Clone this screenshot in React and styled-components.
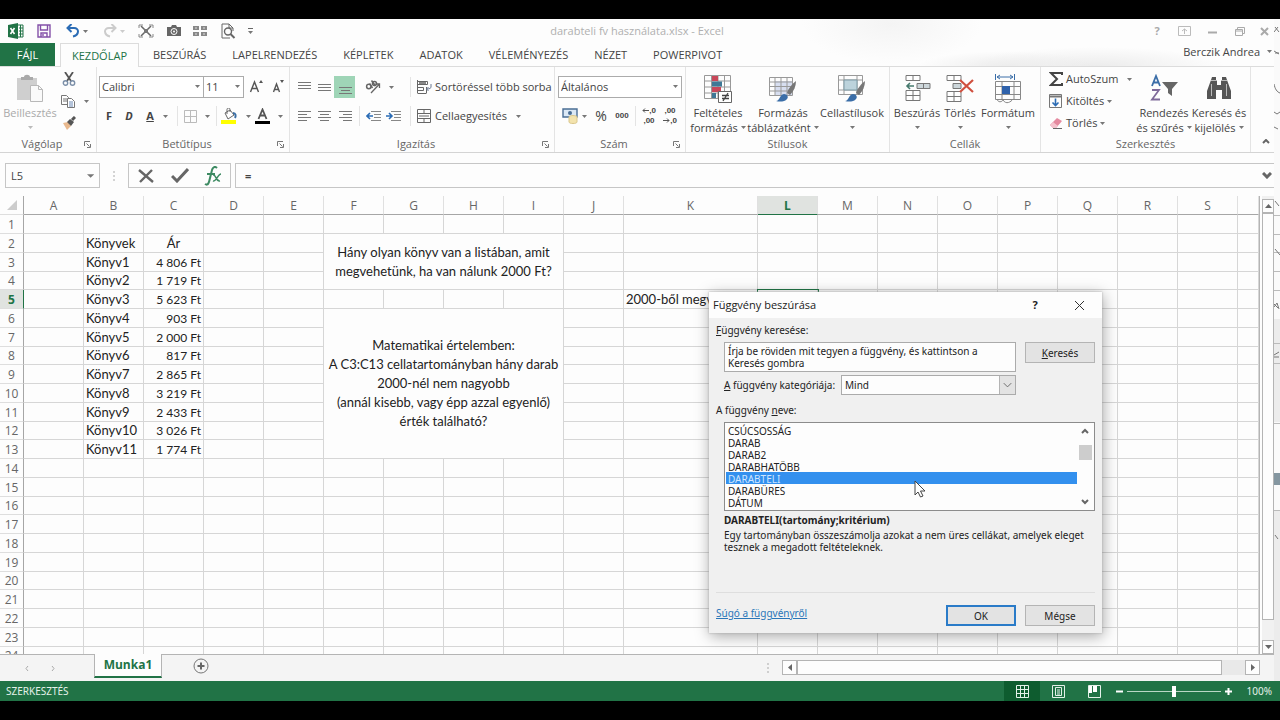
import React from "react";
import styled, { createGlobalStyle, css } from "styled-components";

const GlobalStyle = createGlobalStyle`
  * {
    box-sizing: border-box;
  }
  body {
    margin: 0;
    background: #000;
  }
  button, input, select, textarea {
    font: inherit;
    color: inherit;
    margin: 0;
    border-radius: 0;
  }
`;

const Screen = styled.div`
  height: 100vh;
  padding: 19px 0;
  display: flex;
  flex-direction: column;
  overflow: hidden;
  background: #000;
  color: #444;
  font-family: "Open Sans", "Noto Sans", sans-serif;
  font-size: 11px;
  line-height: 14px;
`;
const Desktop = styled.div`
  flex: 1;
  min-height: 0;
  display: flex;
  background: #fdfdfd;
`;
const Workbook = styled.main`
  position: relative;
  flex: 1;
  min-width: 0;
  display: flex;
  flex-direction: column;
`;
const Header = styled.header`
  background: radial-gradient(ellipse 90px 16px at 79% 100%, #ececec, transparent),
    radial-gradient(ellipse 130px 20px at 86% 100%, #ebebeb, transparent),
    radial-gradient(ellipse 90px 40px at 70% 10%, #f4f4f4, transparent), #fdfdfd;
`;
const TitleBar = styled.div`
  height: 24px;
  display: flex;
  align-items: center;
`;
const QuickAccess = styled.div`
  flex: 1;
  display: flex;
  align-items: center;
`;
const Title = styled.h1`
  margin: 0;
  font-size: 11px;
  font-weight: 400;
  color: #b0b0b0;
`;
const WindowButtons = styled.div`
  flex: 1;
  display: flex;
  justify-content: flex-end;
`;
const TabRow = styled.nav`
  height: 24px;
  display: flex;
  align-items: stretch;
  border-bottom: 1px solid #dcdcdc;
`;
const FileTab = styled.button`
  width: 55px;
  margin-right: 5px;
  padding: 0;
  border: 0;
  background: #217346;
  color: #fff;
`;
const Tab = styled.button`
  padding: 0 13px;
  border: 0;
  background: none;
  ${(props) =>
    props.$active &&
    css`
      padding: 0 11px;
      margin: 0 1px -1px 0;
      border: 1px solid #dcdcdc;
      border-bottom: 0;
      background: #fdfdfd;
      color: #217346;
    `}
`;
const UserButton = styled.button`
  margin-left: auto;
  padding: 0 2px 6px 0;
  border: 0;
  background: none;
  display: flex;
  align-items: center;
  gap: 7px;
`;

const Ribbon = styled.div`
  height: 86px;
  display: flex;
  border-bottom: 1px solid #d4d4d4;
`;
const GroupBox = styled.section`
  flex: 0 0 ${(props) => props.$width}px;
  display: flex;
  flex-direction: column;
  border-right: 1px solid #e4e4e4;
`;
const GroupBody = styled.div`
  flex: 1;
  min-height: 0;
  display: flex;
  padding: 1px 0 0 ${(props) => props.$pad || 0}px;
`;
const GroupLabel = styled.div`
  height: 16px;
  padding-right: ${(props) => (props.$launcher ? 5 : 0)}px;
  display: flex;
  align-items: center;
  text-align: center;
  color: #666;
  span {
    flex: 1;
  }
`;
const Rows = styled.div`
  display: flex;
  flex-direction: column;
  gap: ${(props) => (props.$spaced ? 5 : 0)}px;
  padding-top: ${(props) => (props.$spaced ? 4 : 0)}px;
`;
const Row = styled.div`
  height: ${(props) => props.$height || 22}px;
  display: flex;
  align-items: center;
`;
const Tool = styled.button`
  flex: none;
  width: ${(props) => (props.$width ? props.$width + "px" : "auto")};
  height: 22px;
  padding: 0;
  border: 0;
  display: flex;
  align-items: center;
  justify-content: ${(props) => (props.$start ? "flex-start" : "center")};
  gap: 3px;
  white-space: nowrap;
  background: ${(props) => (props.$on ? "#9fd5b7" : "none")};
  color: ${(props) => (props.$dim ? "#aaa" : "inherit")};
  font-size: ${(props) => (props.$large ? 14 : 11)}px;
  font-weight: ${(props) => (props.$bold ? 700 : 400)};
`;
const BigTool = styled.button`
  flex: none;
  width: ${(props) => props.$width}px;
  padding: 6px 0 0;
  border: 0;
  background: none;
  display: flex;
  flex-direction: column;
  align-items: center;
  white-space: nowrap;
  color: ${(props) => (props.$dim ? "#aaa" : "#444")};
  svg {
    flex: none;
  }
`;
const BigLabel = styled.span`
  height: 15px;
  display: flex;
  align-items: center;
  gap: 3px;
`;
const IconSlot = styled.span`
  height: 31px;
`;
const Divider = styled.span`
  width: 1px;
  height: 20px;
  margin: 0 ${(props) => props.$gap || 0}px;
  background: #e4e4e4;
`;
const Combo = styled.span`
  position: relative;
  flex: none;
  width: ${(props) => props.$width}px;
  height: 22px;
  margin-right: -1px;
  select {
    width: 100%;
    height: 100%;
    padding: 0 2px;
    appearance: none;
    border: 1px solid #ababab;
    background: #fff;
  }
  svg {
    position: absolute;
    right: 4px;
    top: 9px;
    pointer-events: none;
  }
`;
const CollapseSlot = styled.div`
  flex: 1;
  display: flex;
  align-items: flex-end;
  padding-left: 4px;
`;

const FormulaBar = styled.div`
  height: 43px;
  padding: 10px 0 8px 5px;
  display: flex;
  background: #fdfdfd;
`;
const NameBox = styled.label`
  width: 95px;
  display: flex;
  align-items: center;
  padding-right: 5px;
  border: 1px solid #c6c6c6;
  input {
    width: 100%;
    padding: 0 5px;
    border: 0;
    outline: 0;
    background: none;
  }
`;
const Grip = styled.span`
  width: 28px;
  display: flex;
  align-items: center;
  justify-content: center;
`;
const FormulaButtons = styled.div`
  width: 103px;
  display: flex;
  border: 1px solid #c6c6c6;
  button {
    flex: 1;
    height: auto;
  }
`;
const FormulaInput = styled.label`
  flex: 1;
  margin-left: 4px;
  display: flex;
  align-items: center;
  border: 1px solid #c6c6c6;
  border-right: 0;
  input {
    flex: 1;
    padding: 0 9px;
    border: 0;
    outline: 0;
    background: none;
    font-weight: 700;
  }
`;

const SheetArea = styled.div`
  flex: 1;
  min-height: 0;
  display: flex;
  overflow: hidden;
`;
const SheetView = styled.div`
  flex: 1;
  overflow: hidden;
  border-right: 1px solid #b4b4b4;
`;
const Sheet = styled.table`
  width: 100%;
  table-layout: fixed;
  border-collapse: separate;
  border-spacing: 0;
  tr {
    height: 19px;
  }
  tbody tr:nth-child(4n) {
    height: 18px;
  }
`;
const HeadCell = styled.th`
  padding: 0;
  line-height: 17px;
  font-size: 12px;
  font-weight: ${(props) => (props.$active ? 700 : 400)};
  color: ${(props) => (props.$active ? "#217346" : "#666")};
  background: ${(props) => (props.$active ? "#e0e3e0" : "none")};
`;
const ColumnHead = styled(HeadCell)`
  border-right: 1px solid #e0e0e0;
  border-bottom: 1px solid ${(props) => (props.$active ? "#217346" : "#a6a6a6")};
`;
const RowHead = styled(HeadCell)`
  border-right: 1px solid ${(props) => (props.$active ? "#217346" : "#a6a6a6")};
  border-bottom: 1px solid #dedede;
`;
const Cell = styled.td`
  padding: 0 2px;
  border-right: 1px solid #d6d6d6;
  border-bottom: 1px solid #d6d6d6;
  color: #222;
  font-family: Lato, sans-serif;
  font-size: ${(props) => (props.$price ? 12 : 13)}px;
  line-height: ${(props) => (props.$merged ? 19 : 17)}px;
  text-align: ${(props) => props.$align || "left"};
  white-space: pre;
  overflow: visible;
  box-shadow: ${(props) => (props.$active ? "0 0 0 1px #217346" : "none")};
`;
const VScroll = styled.div`
  width: 12px;
  margin-left: 2px;
  padding: 3px 0 0;
  display: flex;
  flex-direction: column;
  background: #f1f1f1;
`;
const ScrollButton = styled.button`
  flex: none;
  width: ${(props) => props.$width || 12}px;
  height: ${(props) => props.$width || 14}px;
  padding: 0;
  border: 1px solid #b4b4b4;
  background: #fdfdfd;
  display: flex;
  align-items: center;
  justify-content: center;
`;
const ScrollThumb = styled.div`
  flex: ${(props) => props.$size};
  border: 1px solid #b4b4b4;
  background: #fdfdfd;
`;
const ScrollSpace = styled.div`
  flex: ${(props) => props.$size};
`;

const SheetTabs = styled.footer`
  height: 27px;
  display: flex;
  background: #f4f4f4;
  border-top: 1px solid #b4b4b4;
`;
const SheetNav = styled.div`
  width: 94px;
  padding-left: 14px;
  display: flex;
  align-items: center;
`;
const SheetTab = styled.button`
  width: 68px;
  height: 24px;
  margin-top: -1px;
  padding: 0;
  border: 1px solid #b4b4b4;
  border-top: 0;
  border-bottom: 2px solid #217346;
  background: #fdfdfd;
  color: #217346;
  font-size: 12px;
  font-weight: 700;
`;
const TabSpace = styled.span`
  flex: 1;
`;
const HScroll = styled.div`
  width: 478px;
  height: 15px;
  margin: 5px 14px 0 0;
  display: flex;
  background: #e9e9e9;
`;
const StatusBar = styled.div`
  height: 20px;
  padding: 0 8px 0 6px;
  display: flex;
  align-items: center;
  background: #217346;
  color: #e4f1e9;
  font-family: "Noto Sans", sans-serif;
  font-size: 10px;
`;
const StatusTools = styled.div`
  margin-left: auto;
  display: flex;
  align-items: center;
`;
const ViewButton = styled.button`
  width: 36px;
  height: 20px;
  padding: 0;
  border: 0;
  display: flex;
  align-items: center;
  justify-content: center;
  background: ${(props) => (props.$on ? "#0e5c2f" : "none")};
`;
const ZoomSlider = styled.input`
  width: 94px;
  height: 12px;
  appearance: none;
  background: linear-gradient(#b9d6c5, #b9d6c5) center / 100% 1px no-repeat;
  &::-webkit-slider-thumb {
    appearance: none;
    width: 4px;
    height: 11px;
    background: #fff;
  }
`;
const ZoomStep = styled.button`
  width: 15px;
  height: 18px;
  padding: 0;
  border: 0;
  background: none;
`;
const ZoomValue = styled.span`
  width: 36px;
  text-align: right;
`;

const Dialog = styled.section`
  position: absolute;
  left: 709px;
  top: 273px;
  width: 393px;
  height: 341px;
  background: #f0f0f0;
  color: #222;
  font-family: "Noto Sans", sans-serif;
  font-size: 10px;
  line-height: 12px;
  box-shadow: 0 0 2px #aaa, 1px 3px 14px rgba(0, 0, 0, 0.35);
`;
const DialogTitle = styled.div`
  height: 26px;
  padding-left: 4px;
  display: flex;
  align-items: center;
  background: #fdfdfd;
  h2 {
    flex: 1;
    margin: 0;
    font-family: "Open Sans", sans-serif;
    font-size: 11px;
    font-weight: 400;
  }
`;
const DialogBody = styled.form`
  padding: 6px 7px 0;
`;
const FieldLabel = styled.label`
  display: block;
  height: 12px;
`;
const NameLabel = styled(FieldLabel)`
  margin-top: 9px;
`;
const SearchGrid = styled.div`
  padding: 6px 0 0 8px;
  display: grid;
  grid-template-columns: 292px 70px;
  column-gap: 9px;
  row-gap: 3px;
`;
const SearchText = styled.textarea`
  height: 30px;
  padding: 2px 3px;
  border: 1px solid #ababab;
  background: #fdfdfd;
  resize: none;
  overflow: hidden;
  outline: 0;
`;
const CategoryRow = styled.div`
  display: flex;
  align-items: center;
  justify-content: space-between;
`;
const CategorySelect = styled.span`
  position: relative;
  width: 175px;
  height: 20px;
  select {
    width: 100%;
    height: 100%;
    padding: 0 3px;
    appearance: none;
    border: 1px solid #ababab;
    background: #fdfdfd;
  }
  svg {
    position: absolute;
    right: 1px;
    top: 1px;
    background: #e3e3e3;
    border-left: 1px solid #b4b4b4;
    pointer-events: none;
  }
`;
const DialogButton = styled.button`
  width: 70px;
  height: 21px;
  padding: 0;
  border: ${(props) => (props.$primary ? "2px solid #2a7bc8" : "1px solid #b4b4b4")};
  background: #e3e3e3;
`;
const ListFrame = styled.div`
  margin: 6px 0 0 8px;
  height: 89px;
  display: flex;
  border: 1px solid #8c8c8c;
  background: #fdfdfd;
`;
const FunctionList = styled.select`
  flex: 1;
  padding: 1px;
  border: 0;
  outline: 0;
  overflow: hidden;
  background: #fdfdfd;
  option {
    min-height: 12px;
    height: 12px;
    padding: 0 2px;
    line-height: 12px;
    color: #222;
  }
  option:checked {
    background: #3390ee linear-gradient(#3390ee, #3390ee);
    color: #cfe6ff;
  }
`;
const ListScroll = styled.div`
  width: 16px;
  display: flex;
  flex-direction: column;
  align-items: center;
  justify-content: space-between;
  padding: 5px 2px 5px 0;
`;
const ListThumb = styled.span`
  width: 13px;
  height: 15px;
  margin-bottom: 28px;
  background: #cdcdcd;
`;
const Help = styled.div`
  height: 79px;
  margin-top: 3px;
  padding-left: 8px;
  border-bottom: 1px solid #dedede;
  p {
    margin: 3px 0 0;
  }
`;
const DialogFooter = styled.div`
  padding-top: 12px;
  display: flex;
  gap: 9px;
  a {
    flex: 1;
    padding-top: 2px;
    color: #2a76b8;
  }
`;
const Pointer = styled.svg`
  position: absolute;
  left: 914px;
  top: 461px;
`;

function Icon({ w = 16, h = w, box, children }) {
  return (
    <svg width={w} height={h} viewBox={box || `0 0 ${w} ${h}`} fill="none" stroke="#666" aria-hidden="true">
      {children}
    </svg>
  );
}
const Caret = ({ color = "#777" }) => (
  <Icon w={5} h={3}>
    <path d="M0 0h5L2.5 3z" fill={color} stroke="none" />
  </Icon>
);
const Chevron = ({ d = "M1 5l4-4 4 4", w = 10, h = 6, weight = 2 }) => (
  <Icon w={w} h={h}>
    <path d={d} strokeWidth={weight} />
  </Icon>
);
const Lines = ({ rows }) => (
  <Icon w={14} h={16}>
    {rows.map(([x, y, width]) => (
      <path key={y} d={`M${x} ${y}.5h${width}`} stroke="#777" />
    ))}
  </Icon>
);
const Launcher = () => (
  <Icon w={7} h={7}>
    <path d="M.5 5V.5H6M2.5 2.5l3 3M6.5 3v3.5H3" stroke="#777" />
  </Icon>
);
const ExcelLogo = () => (
  <Icon>
    <path d="M9 2h6v12H9M11 5h4M11 8h4M11 11h4M12.500 2v12" stroke="#217346" />
    <path d="M0 2l10-2v16L0 14z" fill="#217346" stroke="none" />
    <path d="M2.500 5l4 6M6.500 5l-4 6" stroke="#fff" strokeWidth="1.600" />
  </Icon>
);
const Save = () => (
  <Icon w={14}>
    <path d="M1 1h12v12H1zM3.500 1v5h7V1M4 13V9h6v4M6 10v2" stroke="#8350a8" strokeWidth="1.400" />
  </Icon>
);
const Undo = ({ color = "#2b6cb5", flip }) => (
  <Icon w={14}>
    <g transform={flip ? "matrix(-1 0 0 1 14 0)" : undefined} stroke={color} strokeWidth="2">
      <path d="M5.500 0L1.500 4l4 4" />
      <path d="M2 4h6c5.500 0 5.500 7-1 8.500" />
    </g>
  </Icon>
);
const FullScreen = () => (
  <Icon>
    <path d="M3 3l10 10M13 3L3 13" strokeWidth="1.500" />
    <path d="M1 5V2h4M11 2h4v3M1 11v3h4M11 14h4v-3" stroke="#888" />
    <path d="M6 6h4v4H6z" fill="#777" stroke="none" />
  </Icon>
);
const Camera = () => (
  <Icon>
    <path d="M1 4h4l1-2h4l1 2h4v9H1z" fill="#666" stroke="none" />
    <circle cx="8" cy="8.500" r="3" stroke="#fdfdfd" />
    <circle cx="8" cy="8.500" r="1" fill="#fdfdfd" stroke="none" />
  </Icon>
);
const Tiles = () => (
  <Icon>
    <path d="M1 3h6v4H1zM9 3h6v4H9zM1 9h6v4H1zM9 9h6v4H9z" fill="#888" stroke="none" />
    <path d="M3 5h2M11 5h2M3 11h2M11 11h2" stroke="#ddd" />
  </Icon>
);
const Preview = () => (
  <Icon>
    <path d="M10 15H2V1h7l4 4v3M9 1v4h4" />
    <circle cx="8" cy="8.500" r="3.500" strokeWidth="1.400" />
    <path d="M10.500 11l4 4" strokeWidth="2" />
  </Icon>
);
const Paste = () => (
  <Icon w={28} h={30}>
    <path d="M1 4h20v22H1z" fill="#cfcfcf" stroke="none" />
    <path d="M5 6V3h3c0-3 6-3 6 0h3v3z" fill="#aaa" stroke="none" />
    <path d="M14.500 11.500h8l4 4v12h-12z" fill="#fafafa" stroke="#b8b8b8" />
    <path d="M22.500 11.500v4h4" stroke="#b8b8b8" />
  </Icon>
);
const Scissors = () => (
  <Icon w={14}>
    <path d="M3 0l6 9M11 0L5 9" stroke="#555" strokeWidth="1.800" />
    <circle cx="3.500" cy="11" r="2.200" stroke="#7b8fa8" strokeWidth="1.400" />
    <circle cx="10.500" cy="11" r="2.200" stroke="#7b8fa8" strokeWidth="1.400" />
  </Icon>
);
const Copy = () => (
  <Icon w={14}>
    <path d="M.5 1.500h5l2 2v7h-7zM2 5h4M2 7h4" stroke="#777" />
    <path d="M6.500 4.500h4l3 3v6h-7z" fill="#fff" stroke="#777" />
    <path d="M8 8h4M8 10h4M8 12h4" stroke="#6b89b5" />
  </Icon>
);
const Painter = () => (
  <Icon w={14}>
    <path d="M1 7l5-1 3 4-4 4z" fill="#e9b98e" stroke="none" />
    <path d="M5 6l3-3 4 3-3 4z" fill="#555" stroke="none" />
    <path d="M10 4l3-3" stroke="#555" strokeWidth="3" />
  </Icon>
);
const Borders = () => (
  <Icon w={13}>
    <path d="M.5.5h12v12H.5zM6.500.5v12M.5 6.500h12" stroke="#bbb" />
  </Icon>
);
const Fill = () => (
  <Icon w={16}>
    <path d="M4 5l5-3 4 5-6 4z" fill="#fff" />
    <path d="M6 6V1.500c0-2 3-2 3 0V4" />
    <path d="M12 5c3 0 3 3 2 5" stroke="#3a6ea5" strokeWidth="2" />
    <path d="M0 12h15v4H0z" fill="#ffff00" stroke="none" />
  </Icon>
);
const FontColor = () => (
  <Icon w={15} h={16}>
    <path d="M3.500 11l4-9.500 4 9.500M5 7.500h5" stroke="#555" strokeWidth="1.800" />
    <path d="M0 13h15v3H0z" fill="#000" stroke="none" />
  </Icon>
);
const Grow = ({ up }) => (
  <Icon w={14} h={16}>
    <path d={up ? "M1.500 13l4-10 4 10M3 9.500h5" : "M2.500 13l3-8 3 8M3.500 10.500h4"} stroke="#555" strokeWidth="1.400" />
    <path d={up ? "M10 4l2-3 2 3z" : "M9 1h4l-2 3z"} fill="#555" stroke="none" />
  </Icon>
);
const Orientation = () => (
  <Icon w={16}>
    <path d="M6 14l8.500-9M14.500 9V5h-4" strokeWidth="1.300" />
    <circle cx="3.800" cy="7.500" r="2.200" strokeWidth="1.500" />
    <path d="M4.500 4.500l3 4.500M6.500 1.500l4 5.500" strokeWidth="1.500" />
    <circle cx="9.500" cy="4.500" r="2" strokeWidth="1.500" />
  </Icon>
);
const Indent = ({ right }) => (
  <Icon w={16} h={14}>
    <path d="M5 2.500h10M8 5.500h7M8 8.500h7M5 11.500h10" stroke="#888" />
    <path d={right ? "M0 7h6M3 4l3 3-3 3" : "M7 7H1M4 4L1 7l3 3"} stroke="#2b6cb5" strokeWidth="1.600" />
  </Icon>
);
const Wrap = () => (
  <Icon w={15}>
    <path d="M.5 0v13M.5 1.500h10v3H.5zM.5 7.500h6v3h-6zM.5 13.500h9M9.500 7v6" />
    <path d="M2 3h7" stroke="#888" strokeWidth="2" />
    <path d="M14 4v3c0 1-1 2-4 2M11.500 7l-2 2 2 2" stroke="#6a7892" />
  </Icon>
);
const Merge = () => (
  <Icon w={15} h={15}>
    <path d="M.5.5h13v13H.5zM.5 4.500h13M.5 9.500h13M7 0v4.500M7 9.500v4M2 7h10" />
  </Icon>
);
const Currency = () => (
  <Icon w={17} h={16}>
    <path d="M1 1h14v8H1z" fill="#dbe8f5" stroke="#4a6d94" strokeWidth="1.400" />
    <circle cx="8" cy="5" r="2" fill="#4a6d94" stroke="none" />
    <path d="M7 9c0-2 8-2 8 0v5c0 2-8 2-8 0z" fill="#f3e3ad" stroke="#d9c68c" />
  </Icon>
);
const DecimalArrow = ({ left }) => (
  <Icon w={7} h={5}>
    <path d={left ? "M7 2.500H1M3 .5l-2 2 2 2" : "M0 2.500h6M4 .5l2 2-2 2"} stroke="#555" />
  </Icon>
);
const Decimals = styled.span`
  display: flex;
  flex-direction: column;
  font-family: "Liberation Sans", sans-serif;
  font-size: 8px;
  line-height: 10px;
  font-weight: 700;
`;
const Conditional = () => (
  <Icon w={30} h={30}>
    <path d="M1.500 1.500h26v23h-26zM1.500 7h26M1.500 13h26M1.500 19h26M8.500 1v23M15 1v23M21.500 1v23" stroke="#999" />
    <path d="M9 2h6v5H9zM9 13h9v5H9z" fill="#c9475a" stroke="none" />
    <path d="M9 7.500h10v5H9zM9 19h4v5H9z" fill="#3f7896" stroke="none" />
    <path d="M15.500 17.500h13v11h-13z" fill="#fff" />
    <path d="M19 21.500h7M19 24.500h7M25 19l-5 8" stroke="#444" strokeWidth="1.300" />
  </Icon>
);
const Brush = () => (
  <>
    <path d="M28 7c-4 3-8 8-9 12l3 2c4-4 6-9 6-14z" fill="#777" stroke="none" />
    <path d="M8 27c4 0 3-6 8-7 3 0 5 3 3 5-2 3-8 3-11 2z" fill="#3b6ea8" stroke="none" />
  </>
);
const FormatTable = () => (
  <Icon w={30} h={30}>
    <path d="M7 7h17v14H7z" fill="#d7def0" stroke="none" />
    <path d="M1.500 3.500h23v18h-23zM1.500 8h23M1.500 12.500h23M1.500 17h23M7 3v18M13 3v18M19 3v18" stroke="#999" />
    <Brush />
  </Icon>
);
const CellStyles = () => (
  <Icon w={30} h={30}>
    <path d="M1.500 1.500h24v19h-24zM1.500 6h24M1.500 16h24M7 1v20M20 1v20" stroke="#999" />
    <path d="M7 6h13v10H7z" fill="#bcd3dc" stroke="#7c9aa5" />
    <Brush />
  </Icon>
);
const InsertCells = () => (
  <Icon w={28} h={30}>
    <path d="M3 1.500h14v5H3zM10 1.500v5M3 16.500h14v10H3zM3 21.500h14M10 16.500v10" fill="#fff" stroke="#777" />
    <path d="M14 9.500h13v5H14zM20.500 9v5" fill="#ccd6da" stroke="#777" />
    <path d="M11 12H4M7 9l-3 3 3 3" stroke="#467a6e" strokeWidth="1.600" />
  </Icon>
);
const DeleteCells = () => (
  <Icon w={28} h={30}>
    <path d="M1 1.500h14v5H1zM8 1.500v5M1 17.500h14v10H1zM1 22.500h14M8 17.500v10" fill="#fff" stroke="#777" />
    <path d="M7 9.500h8v5H7z" fill="#ccd6da" stroke="#777" />
    <path d="M14 6l13 12M27 6L14 18" stroke="#d0503f" strokeWidth="2.200" />
  </Icon>
);
const FormatCells = () => (
  <Icon w={28} h={30}>
    <path d="M1.500 7.500h25v18h-25zM1.500 12.500h25M1.500 20.500h25M8 7v18M20 7v18M3 25c1 4 5 3 6 1 3 5 8 2 10-1" stroke="#888" />
    <path d="M1.500 0v6M20.500 0v6M3 3h16M6 1L3 3l3 2M16 1l3 2-3 2" stroke="#3b6ea8" />
    <path d="M8 12h8v8H8z" fill="#2f62ab" stroke="none" />
  </Icon>
);
const Sigma = () => (
  <Icon w={14} h={14}>
    <path d="M13 3V1H2l6 6-6 6h11v-2" stroke="#444" strokeWidth="2" />
  </Icon>
);
const FillDown = () => (
  <Icon w={14} h={14}>
    <path d="M.5.5h12v13H.5z" stroke="#777" />
    <path d="M.5 2.500h12" stroke="#777" strokeWidth="2" />
    <path d="M6.500 4.500v7M3.500 8.500l3 3 3-3" stroke="#2b6cb5" strokeWidth="1.600" />
  </Icon>
);
const Eraser = () => (
  <Icon w={14} h={14}>
    <path d="M1 9l7-7 5 3-6 7H4z" fill="#e58aa0" stroke="none" />
    <path d="M1 9l3-3 5 4-2 2H4z" fill="#f5c2cd" stroke="none" />
    <path d="M4 12.500h9" />
  </Icon>
);
const Sort = () => (
  <Icon w={28} h={28}>
    <path d="M2 12l4-10 4 10M3.500 8.500h5" stroke="#3b6ea8" strokeWidth="1.800" />
    <path d="M2 16h7l-7 9.500h8" stroke="#7f6a9a" strokeWidth="1.800" />
    <path d="M12 8h16l-6 7v7l-4-3v-4z" fill="#666" stroke="none" />
  </Icon>
);
const Binoculars = () => (
  <Icon w={26} h={28}>
    <path d="M6 3h4v3h1v5h4V6h1V3h4l1 3 4 11v8h-9v-9h-6v9H1v-8L5 6z" fill="#555" stroke="none" />
    <path d="M5 6.500h6M15 6.500h6M5.500 10v12M20.500 10v12" stroke="#bbb" />
  </Icon>
);

function Group({ name, width, pad, launcher, children }) {
  return (
    <GroupBox $width={width} aria-label={name}>
      <GroupBody $pad={pad}>{children}</GroupBody>
      <GroupLabel $launcher={launcher}>
        <span>{name}</span>
        {launcher && <Launcher />}
      </GroupLabel>
    </GroupBox>
  );
}

function Large({ icon, lines, width, dim }) {
  const color = dim ? "#bbb" : "#777";
  return (
    <BigTool $width={width} $dim={dim} type="button">
      <IconSlot>{icon}</IconSlot>
      <BigLabel>{lines[0]}</BigLabel>
      <BigLabel>
        {lines[1]}
        <Caret color={color} />
      </BigLabel>
    </BigTool>
  );
}

const tabs = ["KEZDŐLAP", "BESZÚRÁS", "LAPELRENDEZÉS", "KÉPLETEK", "ADATOK", "VÉLEMÉNYEZÉS", "NÉZET", "POWERPIVOT"];

function TopBar() {
  return (
    <Header>
      <TitleBar>
        <QuickAccess>
          <Tool $width={32} aria-label="Excel"><ExcelLogo /></Tool>
          <Tool $width={24} aria-label="Mentés"><Save /></Tool>
          <Tool $width={42} aria-label="Visszavonás"><Undo /><Caret /></Tool>
          <Tool $width={32} aria-label="Mégis"><Undo flip color="#ccc" /><Caret color="#ccc" /></Tool>
          <Tool $width={32} aria-label="Teljes képernyő"><FullScreen /></Tool>
          <Tool $width={24} aria-label="Kamera"><Camera /></Tool>
          <Tool $width={28} aria-label="Ablakok"><Tiles /></Tool>
          <Tool $width={28} aria-label="Nyomtatási kép"><Preview /></Tool>
          <Tool $width={16} aria-label="Testreszabás">
            <Icon w={5} h={7}><path d="M0 .5h5" /><path d="M0 3h5L2.500 6z" fill="#777" stroke="none" /></Icon>
          </Tool>
        </QuickAccess>
        <Title>darabteli fv használata.xlsx - Excel</Title>
        <WindowButtons>
          <Tool $width={26} $bold $dim aria-label="Súgó">?</Tool>
          <Tool $width={28} aria-label="Menüszalag">
            <Icon w={13} h={10}><path d="M.5.5h12v9H.5zM6.500 8V3M4 5l2.500-2L9 5" stroke="#bbb" /></Icon>
          </Tool>
          <Tool $width={28} aria-label="Kis méret"><Icon w={9} h={9}><path d="M0 5.500h9" stroke="#aaa" strokeWidth="2" /></Icon></Tool>
          <Tool $width={28} aria-label="Előző méret">
            <Icon w={10} h={9}><path d="M.5 2.500h7v6h-7zM2.500 2V.5h7v6H8M.5 4h7" stroke="#aaa" /></Icon>
          </Tool>
          <Tool $width={20} aria-label="Bezárás"><Icon w={9} h={9}><path d="M1 1l7 7M8 1L1 8" stroke="#aaa" strokeWidth="2" /></Icon></Tool>
        </WindowButtons>
      </TitleBar>
      <TabRow>
        <FileTab type="button">FÁJL</FileTab>
        {tabs.map((tab, i) => (
          <Tab key={tab} type="button" $active={i === 0}>{tab}</Tab>
        ))}
        <UserButton type="button">Berczik Andrea <Caret /></UserButton>
      </TabRow>
    </Header>
  );
}

function RibbonBar() {
  return (
    <Ribbon>
      <Group name="Vágólap" width={97} launcher>
        <Large dim width={60} icon={<Paste />} lines={["Beillesztés"]} />
        <Rows>
          <Row><Tool $width={18} aria-label="Kivágás"><Scissors /></Tool></Row>
          <Row><Tool $width={30} aria-label="Másolás"><Copy />&nbsp;<Caret /></Tool></Row>
          <Row><Tool $width={18} aria-label="Formátummásoló"><Painter /></Tool></Row>
        </Rows>
      </Group>
      <Group name="Betűtípus" width={193} pad={2} launcher>
        <Rows $spaced>
          <Row $height={30}>
            <Combo $width={105}><select aria-label="Betűtípus"><option>Calibri</option></select><Caret /></Combo>
            <Combo $width={41}><select aria-label="Betűméret"><option>11</option></select><Caret /></Combo>
            <Tool $width={26} aria-label="Betűméret növelése"><Grow up /></Tool>
            <Tool $width={18} aria-label="Betűméret csökkentése"><Grow /></Tool>
          </Row>
          <Row $height={18}>
            <Tool $width={20} $bold>F</Tool>
            <Tool $width={20} $bold><i>D</i></Tool>
            <Tool $width={36} $bold><u>A</u>&nbsp;<Caret /></Tool>
            <Divider $gap={2} />
            <Tool $width={34} aria-label="Szegélyek"><Borders />&nbsp;<Caret /></Tool>
            <Divider $gap={2} />
            <Tool $width={34} aria-label="Kitöltőszín"><Fill />&nbsp;<Caret /></Tool>
            <Tool $width={32} aria-label="Betűszín"><FontColor />&nbsp;<Caret /></Tool>
          </Row>
        </Rows>
      </Group>
      <Group name="Igazítás" width={265} pad={4} launcher>
        <Rows $spaced>
          <Row $height={30}>
            <Tool $width={20} aria-label="Felülre"><Lines rows={[[1, 3, 13], [1, 6, 13], [1, 9, 13]]} /></Tool>
            <Tool $width={20} aria-label="Középre"><Lines rows={[[1, 5, 13], [1, 8, 13], [1, 11, 13]]} /></Tool>
            <Tool $width={21} $on aria-label="Alulra"><Lines rows={[[1, 8, 13], [3, 11, 9], [1, 14, 13]]} /></Tool>
            <Tool $width={49} aria-label="Tájolás"><Orientation />&nbsp;<Caret /></Tool>
            <Divider $gap={6} />
            <Tool $start><Wrap />Sortöréssel több sorba</Tool>
          </Row>
          <Row $height={18}>
            <Tool $width={20} aria-label="Balra"><Lines rows={[[1, 3, 13], [1, 6, 9], [1, 9, 13], [1, 12, 9]]} /></Tool>
            <Tool $width={20} aria-label="Középre zárt"><Lines rows={[[1, 3, 13], [3, 6, 9], [1, 9, 13], [3, 12, 9]]} /></Tool>
            <Tool $width={21} aria-label="Jobbra"><Lines rows={[[1, 3, 13], [5, 6, 9], [1, 9, 13], [5, 12, 9]]} /></Tool>
            <Divider $gap={4} />
            <Tool $width={20} aria-label="Behúzás csökkentése"><Indent /></Tool>
            <Tool $width={20} aria-label="Behúzás növelése"><Indent right /></Tool>
            <Divider $gap={6} />
            <Tool $start><Merge />Cellaegyesítés&nbsp;&nbsp;<Caret /></Tool>
          </Row>
        </Rows>
      </Group>
      <Group name="Szám" width={131} pad={3} launcher>
        <Rows $spaced>
          <Row $height={30}>
            <Combo $width={124}><select aria-label="Számformátum"><option>Általános</option></select><Caret /></Combo>
          </Row>
          <Row $height={18}>
            <Tool $width={32} aria-label="Pénznem"><Currency /><Caret /></Tool>
            <Tool $width={22} $large>%</Tool>
            <Tool $width={20}><Decimals>000</Decimals></Tool>
            <Divider $gap={3} />
            <Tool $width={20} aria-label="Tizedeshelyek növelése">
              <Decimals><span><DecimalArrow left />,0</span><span>,00</span></Decimals>
            </Tool>
            <Tool $width={22} aria-label="Tizedeshelyek csökkentése">
              <Decimals><span>,00</span><span><DecimalArrow />,0</span></Decimals>
            </Tool>
          </Row>
        </Rows>
      </Group>
      <Group name="Stílusok" width={204}>
        <Large width={64} icon={<Conditional />} lines={["Feltételes", "formázás"]} />
        <Large width={66} icon={<FormatTable />} lines={["Formázás", "táblázatként"]} />
        <Large width={72} icon={<CellStyles />} lines={["Cellastílusok"]} />
      </Group>
      <Group name="Cellák" width={151} pad={4}>
        <Large width={46} icon={<InsertCells />} lines={["Beszúrás"]} />
        <Large width={40} icon={<DeleteCells />} lines={["Törlés"]} />
        <Large width={56} icon={<FormatCells />} lines={["Formátum"]} />
      </Group>
      <Group name="Szerkesztés" width={210} pad={8}>
        <Rows>
          <Row><Tool $width={88} $start><Sigma />AutoSzum&nbsp;&nbsp;<Caret /></Tool></Row>
          <Row><Tool $start><FillDown />Kitöltés<Caret /></Tool></Row>
          <Row><Tool $start><Eraser />Törlés<Caret /></Tool></Row>
        </Rows>
        <Large width={54} icon={<Sort />} lines={["Rendezés", "és szűrés"]} />
        <Large width={56} icon={<Binoculars />} lines={["Keresés és", "kijelölés"]} />
      </Group>
      <CollapseSlot>
        <Tool $width={22} aria-label="Menüszalag összecsukása"><Chevron w={8} h={5} d="M1 4l3-3 3 3" /></Tool>
      </CollapseSlot>
    </Ribbon>
  );
}

function FormulaRow() {
  return (
    <FormulaBar>
      <NameBox>
        <input aria-label="Név mező" defaultValue="L5" />
        <Icon w={8} h={4}><path d="M0 0h8L4 4z" fill="#777" stroke="none" /></Icon>
      </NameBox>
      <Grip><Icon w={2} h={10}><path d="M1 0v10" strokeDasharray="2 2" stroke="#aaa" /></Icon></Grip>
      <FormulaButtons>
        <Tool type="button" aria-label="Mégse"><Icon w={16} h={14}><path d="M1 1l14 12M14 1L2 13" stroke="#666" strokeWidth="2.400" /></Icon></Tool>
        <Tool type="button" aria-label="Beírás"><Icon w={18} h={15}><path d="M1 8l5 5L17 1" stroke="#666" strokeWidth="3" /></Icon></Tool>
        <Tool type="button" aria-label="Függvény beszúrása">
          <Icon w={18} h={20}>
            <path d="M1 18c3 2 4-1 5-6l2-8c1-3 3-4 5-2M3 8h8" stroke="#3d8a62" strokeWidth="2" />
            <path d="M9 9c3-1 3 7 7 6M17 8c-3 0-5 8-8 7" stroke="#3d8a62" strokeWidth="1.600" />
          </Icon>
        </Tool>
      </FormulaButtons>
      <FormulaInput>
        <input aria-label="Szerkesztőléc" defaultValue="=" />
        <Tool $width={14} type="button" aria-label="Kibontás"><Chevron d="M1 1l4 4 4-4" w={10} h={7} weight={3} /></Tool>
      </FormulaInput>
    </FormulaBar>
  );
}

const columns = "ABCDEFGHIJKLMNOPQRS".split("");
const prices = ["4 806 Ft", "1 719 Ft", "5 623 Ft", "903 Ft", "2 000 Ft", "817 Ft", "2 865 Ft", "3 219 Ft", "2 433 Ft", "3 026 Ft", "1 774 Ft"];
const merged = [
  { row: 2, span: 3, text: "Hány olyan könyv van a listában, amit\nmegvehetünk, ha van nálunk 2000 Ft?" },
  {
    row: 6,
    span: 8,
    text: "Matematikai értelemben:\nA C3:C13 cellatartományban hány darab\n2000-nél nem nagyobb\n(annál kisebb, vagy épp azzal egyenlő)\nérték található?",
  },
];

function cellFor(col, row) {
  if ("FGHI".includes(col)) {
    const area = merged.find((m) => row >= m.row && row < m.row + m.span);
    if (area && (col !== "F" || row !== area.row)) return null;
    if (area) return <Cell key={col} colSpan={4} rowSpan={area.span} $merged $align="center">{area.text}</Cell>;
  }
  if (col === "B" && row === 2) return <Cell key={col}>Könyvek</Cell>;
  if (col === "C" && row === 2) return <Cell key={col} $align="center">Ár</Cell>;
  if (col === "B" && row > 2 && row < 14) return <Cell key={col}>{`Könyv${row - 2}`}</Cell>;
  if (col === "C" && row > 2 && row < 14) return <Cell key={col} $price $align="right">{prices[row - 3]}</Cell>;
  if (col === "K" && row === 5) return <Cell key={col}>2000-ből megv</Cell>;
  return <Cell key={col} $active={col === "L" && row === 5} />;
}

function SheetGrid() {
  return (
    <SheetView>
      <Sheet>
        <colgroup>
          <col width="24" />
          {columns.map((c) => (
            <col key={c} width={c === "K" ? 134 : 60} />
          ))}
          <col />
        </colgroup>
        <thead>
          <tr>
            <RowHead aria-label="Összes kijelölése">
              <Icon w={10} h={10}><path d="M10 0v10H0z" fill="#ccc" stroke="none" /></Icon>
            </RowHead>
            {columns.map((c) => (
              <ColumnHead key={c} $active={c === "L"}>{c}</ColumnHead>
            ))}
            <ColumnHead />
          </tr>
        </thead>
        <tbody>
          {Array.from({ length: 24 }, (_, i) => i + 1).map((row) => (
            <tr key={row}>
              <RowHead $active={row === 5}>{row}</RowHead>
              {columns.map((c) => cellFor(c, row))}
              <Cell />
            </tr>
          ))}
        </tbody>
      </Sheet>
    </SheetView>
  );
}

const functions = ["CSÚCSOSSÁG", "DARAB", "DARAB2", "DARABHATÖBB", "DARABTELI", "DARABÜRES", "DÁTUM"];

function InsertFunction() {
  return (
    <Dialog role="dialog" aria-label="Függvény beszúrása">
      <DialogTitle>
        <h2>Függvény beszúrása</h2>
        <Tool $width={42} $bold>?</Tool>
        <Tool $width={46} aria-label="Bezárás"><Icon w={11} h={11}><path d="M1 1l9 9M10 1l-9 9" stroke="#333" /></Icon></Tool>
      </DialogTitle>
      <DialogBody>
        <FieldLabel htmlFor="search"><u>F</u>üggvény keresése:</FieldLabel>
        <SearchGrid>
          <SearchText id="search" defaultValue={"Írja be röviden mit tegyen a függvény, és kattintson a\nKeresés gombra"} />
          <DialogButton type="button"><u>K</u>eresés</DialogButton>
          <CategoryRow>
            <label htmlFor="category"><u>A</u> függvény kategóriája:</label>
            <CategorySelect>
              <select id="category"><option>Mind</option></select>
              <Icon w={16} h={18}><path d="M4 7l4 4 4-4" /></Icon>
            </CategorySelect>
          </CategoryRow>
        </SearchGrid>
        <NameLabel htmlFor="names">A függvény <u>n</u>eve:</NameLabel>
        <ListFrame>
          <FunctionList id="names" size={7} defaultValue="DARABTELI">
            {functions.map((f) => (
              <option key={f}>{f}</option>
            ))}
          </FunctionList>
          <ListScroll>
            <Chevron w={8} h={6} d="M1 5l3-3 3 3" />
            <ListThumb />
            <Chevron w={8} h={6} d="M1 1l3 3 3-3" />
          </ListScroll>
        </ListFrame>
        <Help>
          <b>DARABTELI(tartomány;kritérium)</b>
          <p>Egy tartományban összeszámolja azokat a nem üres cellákat, amelyek eleget tesznek a megadott feltételeknek.</p>
        </Help>
        <DialogFooter>
          <a href="#help">Súgó a függvényről</a>
          <DialogButton type="button" $primary>OK</DialogButton>
          <DialogButton type="button">Mégse</DialogButton>
        </DialogFooter>
      </DialogBody>
    </Dialog>
  );
}

// strip of the window that lies behind the right edge
function NextWindow() {
  return (
    <Icon w={6} h={662}>
      <path d="M0 0h6v662H0z" fill="#fafafa" stroke="none" />
      <path d="M0 300h6v103H0zM0 492h6v170H0z" fill="#ececec" stroke="none" />
      <path d="M0 196.500h6M0 215.500h6M0 233.500h6M0 252.500h6M0 271.500h6M0 324.500h6M0 344.500h6M0 404.500h6M0 491.500h6" stroke="#bbb" />
      <path d="M1 8l4 5M4 8l-4 5M0 32l5 3M1 34h4M0 65c1 5 3 8 6 9M0 93l3 2 3-2M0 108l4 2M1 182l4 5M1 230l5 6M0 285l4 4M0 288l3-4 2 6M0 336l5-3M0 338h5M1 516l3 4" stroke="#777" />
      <path d="M0 454h6v12H0z" fill="#8496a0" stroke="none" />
    </Icon>
  );
}

export default function App() {
  return (
    <>
      <GlobalStyle />
      <Screen>
        <Desktop>
          <Workbook>
            <TopBar />
            <RibbonBar />
            <FormulaRow />
            <SheetArea>
              <SheetGrid />
              <VScroll>
                <ScrollButton aria-label="Fel"><Icon w={7} h={4}><path d="M0 4h7L3.500 0z" fill="#666" stroke="none" /></Icon></ScrollButton>
                <ScrollThumb $size={20} />
                <ScrollSpace $size={1} />
                <ScrollButton aria-label="Le"><Icon w={7} h={4}><path d="M0 0h7L3.500 4z" fill="#666" stroke="none" /></Icon></ScrollButton>
              </VScroll>
            </SheetArea>
            <SheetTabs>
              <SheetNav>
                <Tool $width={26} aria-label="Előző lap"><Icon w={4} h={7}><path d="M3 1L1 3.500 3 6" stroke="#aaa" /></Icon></Tool>
                <Tool $width={26} aria-label="Következő lap"><Icon w={4} h={7}><path d="M1 1l2 2.500L1 6" stroke="#aaa" /></Icon></Tool>
              </SheetNav>
              <SheetTab type="button">Munka1</SheetTab>
              <Tool $width={77} aria-label="Új munkalap">
                <Icon w={16}><circle cx="8" cy="8" r="7" stroke="#777" /><path d="M8 4.500v7M4.500 8h7" strokeWidth="2" /></Icon>
              </Tool>
              <TabSpace />
              <Grip><Icon w={2} h={10}><path d="M1 0v10" strokeDasharray="2 2" stroke="#aaa" /></Icon></Grip>
              <HScroll>
                <ScrollButton $width={15} aria-label="Balra"><Icon w={4} h={7}><path d="M4 0v7L0 3.500z" fill="#666" stroke="none" /></Icon></ScrollButton>
                <ScrollThumb $size={18} />
                <ScrollSpace $size={1} />
                <ScrollButton $width={15} aria-label="Jobbra"><Icon w={4} h={7}><path d="M0 0v7l4-3.500z" fill="#666" stroke="none" /></Icon></ScrollButton>
              </HScroll>
            </SheetTabs>
            <InsertFunction />
            <Pointer width="12" height="18" viewBox="0 0 12 18" aria-hidden="true">
              <path d="M1 1v14l3-3 2.500 5 2.500-1-2.500-5H11z" fill="#fff" stroke="#444" />
            </Pointer>
          </Workbook>
          <NextWindow />
        </Desktop>
        <StatusBar>
          SZERKESZTÉS
          <StatusTools>
            <ViewButton $on aria-label="Normál"><Icon w={13} h={13}><path d="M.5.5h12v12H.5zM4.500 0v13M8.500 0v13M0 4.500h13M0 8.500h13" stroke="#e4f1e9" /></Icon></ViewButton>
            <ViewButton aria-label="Lapelrendezés"><Icon w={13} h={13}><path d="M.5.5h12v12H.5zM3.500 2.500h6v8h-6zM5 5h3M5 7h3M5 9h3" stroke="#e4f1e9" /></Icon></ViewButton>
            <ViewButton aria-label="Oldaltörés"><Icon w={13} h={13}><path d="M.5.5h12v12H.5z" stroke="#e4f1e9" /><path d="M1 1h3v7H1zM5 1h4v6H5z" fill="#fff" stroke="none" /></Icon></ViewButton>
            <ZoomStep aria-label="Kicsinyítés"><Icon w={7} h={7}><path d="M0 3.500h7" stroke="#fff" strokeWidth="2" /></Icon></ZoomStep>
            <ZoomSlider type="range" aria-label="Nagyítás" defaultValue={50} />
            <ZoomStep aria-label="Nagyítás növelése"><Icon w={7} h={7}><path d="M0 3.500h7M3.500 0v7" stroke="#fff" strokeWidth="2" /></Icon></ZoomStep>
            <ZoomValue>100%</ZoomValue>
          </StatusTools>
        </StatusBar>
      </Screen>
    </>
  );
}
